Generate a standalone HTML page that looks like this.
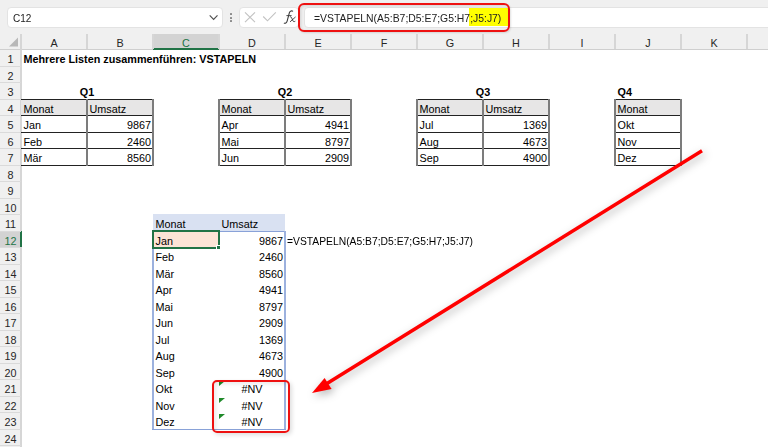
<!DOCTYPE html><html><head><meta charset="utf-8"><style>
*{margin:0;padding:0;box-sizing:border-box}
html,body{width:768px;height:447px;overflow:hidden;background:#fff;font-family:"Liberation Sans",sans-serif;font-size:10.8px;color:#000}
.a{position:absolute}
.t{position:absolute;white-space:nowrap;line-height:12px}
</style></head><body><div class="a" style="left:0;top:0;width:768px;height:50px;background:#f0f0f0"></div>
<div class="a" style="left:7px;top:7px;width:216px;height:21px;background:#fff;border:1px solid #e3e3e3;border-radius:4px"></div>
<div class="t" style="left:12.5px;top:12px;color:#222;transform:scaleX(0.93);transform-origin:0 0">C12</div>
<svg class="a" style="left:208px;top:13px" width="12" height="8" viewBox="0 0 12 8"><path d="M1.7 2.4 L5.6 6.4 L9.5 2.4" fill="none" stroke="#505050" stroke-width="1.15"/></svg>
<div class="a" style="left:230px;top:13px;width:2px;height:2px;background:#8a8a8a;border-radius:0.5px"></div>
<div class="a" style="left:230px;top:16.5px;width:2px;height:2px;background:#8a8a8a;border-radius:0.5px"></div>
<div class="a" style="left:230px;top:20px;width:2px;height:2px;background:#8a8a8a;border-radius:0.5px"></div>
<div class="a" style="left:239px;top:7px;width:60px;height:21px;background:#fff;border:1px solid #e3e3e3;border-radius:4px"></div>
<svg class="a" style="left:244px;top:12px" width="12" height="11" viewBox="0 0 12 11"><path d="M1 0.4 L11 10.2 M11 0.4 L1 10.2" fill="none" stroke="#c2c2c2" stroke-width="1.15"/></svg>
<svg class="a" style="left:262px;top:12px" width="15" height="11" viewBox="0 0 15 11"><path d="M1.2 4.5 L5.5 8.8 L13.8 0.4" fill="none" stroke="#c2c2c2" stroke-width="1.15"/></svg>
<svg class="a" style="left:0;top:0" width="300" height="30" viewBox="0 0 300 30"><path d="M293 11.4 C291.8 10.4 290 10.9 289.4 12.6 L287.2 20.8 C286.6 23 285.2 23.6 283.9 23" fill="none" stroke="#3a3a3a" stroke-width="1.1"/><path d="M286.4 15.6 L291.6 15.6" stroke="#3a3a3a" stroke-width="0.9"/><path d="M289.9 16.8 C291 16.6 291.4 17.2 291.9 18.4 L292.9 20.8 C293.3 21.7 294.3 21.9 295.3 21.2" fill="none" stroke="#3a3a3a" stroke-width="1"/><path d="M295.6 16.9 L290 21.9" stroke="#3a3a3a" stroke-width="0.9"/></svg>
<div class="a" style="left:304px;top:6.5px;width:470px;height:21px;background:#fff;border:1px solid #e3e3e3;border-radius:4px"></div>
<div class="a" style="left:469px;top:8px;width:39px;height:18px;background:#ffff00"></div>
<div class="t" style="left:313.5px;top:11.8px;color:#222;transform:scaleX(0.963);transform-origin:0 0">=VSTAPELN(A5:B7;D5:E7;G5:H7;J5:J7)</div>
<div class="a" style="left:297.5px;top:3px;width:212px;height:29px;border:2px solid #ee1111;border-radius:6px;box-shadow:inset 1px 1px 3px rgba(0,0,0,0.12), 1px 1px 2px rgba(0,0,0,0.12)"></div>
<div class="a" style="left:0;top:49px;width:768px;height:1px;background:#cfcfcf"></div>
<div class="a" style="left:153px;top:34px;width:66px;height:15px;background:#d3d3d3"></div>
<div class="a" style="left:153px;top:48px;width:66px;height:2px;background:#217346"></div>
<div class="a" style="left:86px;top:34px;width:2px;height:15px;background:#d6d6d6"></div>
<div class="t" style="left:21px;top:36.5px;width:66px;text-align:center;color:#262626">A</div>
<div class="a" style="left:152px;top:34px;width:2px;height:15px;background:#d6d6d6"></div>
<div class="t" style="left:87px;top:36.5px;width:66px;text-align:center;color:#262626">B</div>
<div class="a" style="left:218px;top:34px;width:2px;height:15px;background:#d6d6d6"></div>
<div class="t" style="left:153px;top:36.5px;width:66px;text-align:center;color:#217346">C</div>
<div class="a" style="left:284px;top:34px;width:2px;height:15px;background:#d6d6d6"></div>
<div class="t" style="left:219px;top:36.5px;width:66px;text-align:center;color:#262626">D</div>
<div class="a" style="left:350px;top:34px;width:2px;height:15px;background:#d6d6d6"></div>
<div class="t" style="left:285px;top:36.5px;width:66px;text-align:center;color:#262626">E</div>
<div class="a" style="left:416px;top:34px;width:2px;height:15px;background:#d6d6d6"></div>
<div class="t" style="left:351px;top:36.5px;width:66px;text-align:center;color:#262626">F</div>
<div class="a" style="left:482px;top:34px;width:2px;height:15px;background:#d6d6d6"></div>
<div class="t" style="left:417px;top:36.5px;width:66px;text-align:center;color:#262626">G</div>
<div class="a" style="left:548px;top:34px;width:2px;height:15px;background:#d6d6d6"></div>
<div class="t" style="left:483px;top:36.5px;width:66px;text-align:center;color:#262626">H</div>
<div class="a" style="left:614px;top:34px;width:2px;height:15px;background:#d6d6d6"></div>
<div class="t" style="left:549px;top:36.5px;width:66px;text-align:center;color:#262626">I</div>
<div class="a" style="left:680px;top:34px;width:2px;height:15px;background:#d6d6d6"></div>
<div class="t" style="left:615px;top:36.5px;width:66px;text-align:center;color:#262626">J</div>
<div class="a" style="left:746px;top:34px;width:2px;height:15px;background:#d6d6d6"></div>
<div class="t" style="left:681px;top:36.5px;width:66px;text-align:center;color:#262626">K</div>
<svg class="a" style="left:8px;top:37px" width="11" height="10" viewBox="0 0 11 10"><path d="M10 0.5 L10 9.5 L1 9.5 Z" fill="#b8b8b8"/></svg>
<div class="a" style="left:0;top:50px;width:21px;height:397px;background:#f0f0f0"></div>
<div class="a" style="left:20px;top:34px;width:2px;height:413px;background:#d6d6d6"></div>
<div class="a" style="left:0;top:231px;width:21px;height:16px;background:#d3d3d3"></div>
<div class="a" style="left:20px;top:231px;width:2px;height:16px;background:#217346"></div>
<div class="a" style="left:0;top:66px;width:21px;height:1px;background:#dadada"></div>
<div class="t" style="left:0;top:53.20px;width:21px;text-align:center;color:#262626">1</div>
<div class="a" style="left:0;top:82px;width:21px;height:1px;background:#dadada"></div>
<div class="t" style="left:0;top:69.70px;width:21px;text-align:center;color:#262626">2</div>
<div class="a" style="left:0;top:99px;width:21px;height:1px;background:#dadada"></div>
<div class="t" style="left:0;top:86.20px;width:21px;text-align:center;color:#262626">3</div>
<div class="a" style="left:0;top:115px;width:21px;height:1px;background:#dadada"></div>
<div class="t" style="left:0;top:102.70px;width:21px;text-align:center;color:#262626">4</div>
<div class="a" style="left:0;top:132px;width:21px;height:1px;background:#dadada"></div>
<div class="t" style="left:0;top:119.20px;width:21px;text-align:center;color:#262626">5</div>
<div class="a" style="left:0;top:148px;width:21px;height:1px;background:#dadada"></div>
<div class="t" style="left:0;top:135.70px;width:21px;text-align:center;color:#262626">6</div>
<div class="a" style="left:0;top:165px;width:21px;height:1px;background:#dadada"></div>
<div class="t" style="left:0;top:152.20px;width:21px;text-align:center;color:#262626">7</div>
<div class="a" style="left:0;top:181px;width:21px;height:1px;background:#dadada"></div>
<div class="t" style="left:0;top:168.70px;width:21px;text-align:center;color:#262626">8</div>
<div class="a" style="left:0;top:198px;width:21px;height:1px;background:#dadada"></div>
<div class="t" style="left:0;top:185.20px;width:21px;text-align:center;color:#262626">9</div>
<div class="a" style="left:0;top:214px;width:21px;height:1px;background:#dadada"></div>
<div class="t" style="left:0;top:201.70px;width:21px;text-align:center;color:#262626">10</div>
<div class="a" style="left:0;top:231px;width:21px;height:1px;background:#dadada"></div>
<div class="t" style="left:0;top:218.20px;width:21px;text-align:center;color:#262626">11</div>
<div class="a" style="left:0;top:247px;width:21px;height:1px;background:#dadada"></div>
<div class="t" style="left:0;top:234.70px;width:21px;text-align:center;color:#217346">12</div>
<div class="a" style="left:0;top:264px;width:21px;height:1px;background:#dadada"></div>
<div class="t" style="left:0;top:251.20px;width:21px;text-align:center;color:#262626">13</div>
<div class="a" style="left:0;top:280px;width:21px;height:1px;background:#dadada"></div>
<div class="t" style="left:0;top:267.70px;width:21px;text-align:center;color:#262626">14</div>
<div class="a" style="left:0;top:297px;width:21px;height:1px;background:#dadada"></div>
<div class="t" style="left:0;top:284.20px;width:21px;text-align:center;color:#262626">15</div>
<div class="a" style="left:0;top:313px;width:21px;height:1px;background:#dadada"></div>
<div class="t" style="left:0;top:300.70px;width:21px;text-align:center;color:#262626">16</div>
<div class="a" style="left:0;top:330px;width:21px;height:1px;background:#dadada"></div>
<div class="t" style="left:0;top:317.20px;width:21px;text-align:center;color:#262626">17</div>
<div class="a" style="left:0;top:346px;width:21px;height:1px;background:#dadada"></div>
<div class="t" style="left:0;top:333.70px;width:21px;text-align:center;color:#262626">18</div>
<div class="a" style="left:0;top:363px;width:21px;height:1px;background:#dadada"></div>
<div class="t" style="left:0;top:350.20px;width:21px;text-align:center;color:#262626">19</div>
<div class="a" style="left:0;top:379px;width:21px;height:1px;background:#dadada"></div>
<div class="t" style="left:0;top:366.70px;width:21px;text-align:center;color:#262626">20</div>
<div class="a" style="left:0;top:396px;width:21px;height:1px;background:#dadada"></div>
<div class="t" style="left:0;top:383.20px;width:21px;text-align:center;color:#262626">21</div>
<div class="a" style="left:0;top:412px;width:21px;height:1px;background:#dadada"></div>
<div class="t" style="left:0;top:399.70px;width:21px;text-align:center;color:#262626">22</div>
<div class="a" style="left:0;top:429px;width:21px;height:1px;background:#dadada"></div>
<div class="t" style="left:0;top:416.20px;width:21px;text-align:center;color:#262626">23</div>
<div class="a" style="left:0;top:445px;width:21px;height:1px;background:#dadada"></div>
<div class="t" style="left:0;top:432.70px;width:21px;text-align:center;color:#262626">24</div>
<div class="a" style="left:0;top:462px;width:21px;height:1px;background:#dadada"></div>
<div class="t" style="left:0;top:449.20px;width:21px;text-align:center;color:#262626">25</div>
<div class="t" style="left:23.5px;top:53.20px;font-weight:bold;color:#000">Mehrere Listen zusammenführen: VSTAPELN</div>
<div class="a" style="left:21px;top:99px;width:132px;height:16px;background:#e7e6e6"></div>
<div class="a" style="left:21px;top:99px;width:133px;height:1px;background:#222"></div>
<div class="a" style="left:21px;top:115px;width:133px;height:1px;background:#222"></div>
<div class="a" style="left:21px;top:132px;width:133px;height:1px;background:#222"></div>
<div class="a" style="left:21px;top:148px;width:133px;height:1px;background:#222"></div>
<div class="a" style="left:21px;top:165px;width:133px;height:1px;background:#222"></div>
<div class="a" style="left:86px;top:99px;width:2px;height:67px;background:#7c7c7c"></div>
<div class="a" style="left:152px;top:99px;width:2px;height:67px;background:#7c7c7c"></div>
<div class="t" style="left:21px;top:86.20px;width:132px;text-align:center;font-weight:bold;color:#000">Q1</div>
<div class="t" style="left:23.5px;top:102.70px;color:#000">Monat</div>
<div class="t" style="left:89.5px;top:102.70px;color:#000">Umsatz</div>
<div class="t" style="left:23.5px;top:119.20px;color:#000">Jan</div>
<div class="t" style="left:87px;top:119.20px;width:64px;text-align:right;color:#000">9867</div>
<div class="t" style="left:23.5px;top:135.70px;color:#000">Feb</div>
<div class="t" style="left:87px;top:135.70px;width:64px;text-align:right;color:#000">2460</div>
<div class="t" style="left:23.5px;top:152.20px;color:#000">Mär</div>
<div class="t" style="left:87px;top:152.20px;width:64px;text-align:right;color:#000">8560</div>
<div class="a" style="left:219px;top:99px;width:132px;height:16px;background:#e7e6e6"></div>
<div class="a" style="left:219px;top:99px;width:133px;height:1px;background:#222"></div>
<div class="a" style="left:219px;top:115px;width:133px;height:1px;background:#222"></div>
<div class="a" style="left:219px;top:132px;width:133px;height:1px;background:#222"></div>
<div class="a" style="left:219px;top:148px;width:133px;height:1px;background:#222"></div>
<div class="a" style="left:219px;top:165px;width:133px;height:1px;background:#222"></div>
<div class="a" style="left:218px;top:99px;width:2px;height:67px;background:#7c7c7c"></div>
<div class="a" style="left:284px;top:99px;width:2px;height:67px;background:#7c7c7c"></div>
<div class="a" style="left:350px;top:99px;width:2px;height:67px;background:#7c7c7c"></div>
<div class="t" style="left:219px;top:86.20px;width:132px;text-align:center;font-weight:bold;color:#000">Q2</div>
<div class="t" style="left:221.5px;top:102.70px;color:#000">Monat</div>
<div class="t" style="left:287.5px;top:102.70px;color:#000">Umsatz</div>
<div class="t" style="left:221.5px;top:119.20px;color:#000">Apr</div>
<div class="t" style="left:285px;top:119.20px;width:64px;text-align:right;color:#000">4941</div>
<div class="t" style="left:221.5px;top:135.70px;color:#000">Mai</div>
<div class="t" style="left:285px;top:135.70px;width:64px;text-align:right;color:#000">8797</div>
<div class="t" style="left:221.5px;top:152.20px;color:#000">Jun</div>
<div class="t" style="left:285px;top:152.20px;width:64px;text-align:right;color:#000">2909</div>
<div class="a" style="left:417px;top:99px;width:132px;height:16px;background:#e7e6e6"></div>
<div class="a" style="left:417px;top:99px;width:133px;height:1px;background:#222"></div>
<div class="a" style="left:417px;top:115px;width:133px;height:1px;background:#222"></div>
<div class="a" style="left:417px;top:132px;width:133px;height:1px;background:#222"></div>
<div class="a" style="left:417px;top:148px;width:133px;height:1px;background:#222"></div>
<div class="a" style="left:417px;top:165px;width:133px;height:1px;background:#222"></div>
<div class="a" style="left:416px;top:99px;width:2px;height:67px;background:#7c7c7c"></div>
<div class="a" style="left:482px;top:99px;width:2px;height:67px;background:#7c7c7c"></div>
<div class="a" style="left:548px;top:99px;width:2px;height:67px;background:#7c7c7c"></div>
<div class="t" style="left:417px;top:86.20px;width:132px;text-align:center;font-weight:bold;color:#000">Q3</div>
<div class="t" style="left:419.5px;top:102.70px;color:#000">Monat</div>
<div class="t" style="left:485.5px;top:102.70px;color:#000">Umsatz</div>
<div class="t" style="left:419.5px;top:119.20px;color:#000">Jul</div>
<div class="t" style="left:483px;top:119.20px;width:64px;text-align:right;color:#000">1369</div>
<div class="t" style="left:419.5px;top:135.70px;color:#000">Aug</div>
<div class="t" style="left:483px;top:135.70px;width:64px;text-align:right;color:#000">4673</div>
<div class="t" style="left:419.5px;top:152.20px;color:#000">Sep</div>
<div class="t" style="left:483px;top:152.20px;width:64px;text-align:right;color:#000">4900</div>
<div class="a" style="left:615px;top:99px;width:66px;height:16px;background:#e7e6e6"></div>
<div class="a" style="left:615px;top:99px;width:67px;height:1px;background:#222"></div>
<div class="a" style="left:615px;top:115px;width:67px;height:1px;background:#222"></div>
<div class="a" style="left:615px;top:132px;width:67px;height:1px;background:#222"></div>
<div class="a" style="left:615px;top:148px;width:67px;height:1px;background:#222"></div>
<div class="a" style="left:615px;top:165px;width:67px;height:1px;background:#222"></div>
<div class="a" style="left:614px;top:99px;width:2px;height:67px;background:#7c7c7c"></div>
<div class="a" style="left:680px;top:99px;width:2px;height:67px;background:#7c7c7c"></div>
<div class="t" style="left:617.5px;top:86.20px;font-weight:bold;color:#000">Q4</div>
<div class="t" style="left:617.5px;top:102.70px;color:#000">Monat</div>
<div class="t" style="left:617.5px;top:119.20px;color:#000">Okt</div>
<div class="t" style="left:617.5px;top:135.70px;color:#000">Nov</div>
<div class="t" style="left:617.5px;top:152.20px;color:#000">Dez</div>
<div class="a" style="left:153px;top:214px;width:132px;height:17px;background:#d9e1f2"></div>
<div class="a" style="left:152px;top:231px;width:134px;height:1px;background:#89a2d8"></div>
<div class="a" style="left:152px;top:231px;width:2px;height:199px;background:#9cb1de"></div>
<div class="a" style="left:284px;top:231px;width:2px;height:199px;background:#9cb1de"></div>
<div class="a" style="left:152px;top:429px;width:134px;height:1px;background:#89a2d8"></div>
<div class="a" style="left:153px;top:231px;width:66px;height:16px;background:#fce4d6"></div>
<div class="a" style="left:152px;top:230px;width:68px;height:19px;border:2px solid #217346"></div>
<div class="a" style="left:216px;top:245px;width:5px;height:5px;background:#217346;border:1px solid #fff"></div>
<div class="t" style="left:155.5px;top:218.20px;color:#000">Monat</div>
<div class="t" style="left:221.5px;top:218.20px;color:#000">Umsatz</div>
<div class="t" style="left:155.5px;top:234.70px;color:#000">Jan</div>
<div class="t" style="left:219px;top:234.70px;width:64px;text-align:right;color:#000">9867</div>
<div class="t" style="left:155.5px;top:251.20px;color:#000">Feb</div>
<div class="t" style="left:219px;top:251.20px;width:64px;text-align:right;color:#000">2460</div>
<div class="t" style="left:155.5px;top:267.70px;color:#000">Mär</div>
<div class="t" style="left:219px;top:267.70px;width:64px;text-align:right;color:#000">8560</div>
<div class="t" style="left:155.5px;top:284.20px;color:#000">Apr</div>
<div class="t" style="left:219px;top:284.20px;width:64px;text-align:right;color:#000">4941</div>
<div class="t" style="left:155.5px;top:300.70px;color:#000">Mai</div>
<div class="t" style="left:219px;top:300.70px;width:64px;text-align:right;color:#000">8797</div>
<div class="t" style="left:155.5px;top:317.20px;color:#000">Jun</div>
<div class="t" style="left:219px;top:317.20px;width:64px;text-align:right;color:#000">2909</div>
<div class="t" style="left:155.5px;top:333.70px;color:#000">Jul</div>
<div class="t" style="left:219px;top:333.70px;width:64px;text-align:right;color:#000">1369</div>
<div class="t" style="left:155.5px;top:350.20px;color:#000">Aug</div>
<div class="t" style="left:219px;top:350.20px;width:64px;text-align:right;color:#000">4673</div>
<div class="t" style="left:155.5px;top:366.70px;color:#000">Sep</div>
<div class="t" style="left:219px;top:366.70px;width:64px;text-align:right;color:#000">4900</div>
<div class="t" style="left:155.5px;top:383.20px;color:#000">Okt</div>
<div class="t" style="left:219px;top:383.20px;width:66px;text-align:center;color:#000">#NV</div>
<svg class="a" style="left:219px;top:380.5px" width="6" height="6" viewBox="0 0 6 6"><path d="M0 0 L6 0 L0 5 Z" fill="#1f8a2a"/></svg>
<div class="t" style="left:155.5px;top:399.70px;color:#000">Nov</div>
<div class="t" style="left:219px;top:399.70px;width:66px;text-align:center;color:#000">#NV</div>
<svg class="a" style="left:219px;top:397.5px" width="6" height="6" viewBox="0 0 6 6"><path d="M0 0 L6 0 L0 5 Z" fill="#1f8a2a"/></svg>
<div class="t" style="left:155.5px;top:416.20px;color:#000">Dez</div>
<div class="t" style="left:219px;top:416.20px;width:66px;text-align:center;color:#000">#NV</div>
<svg class="a" style="left:219px;top:413.5px" width="6" height="6" viewBox="0 0 6 6"><path d="M0 0 L6 0 L0 5 Z" fill="#1f8a2a"/></svg>
<div class="t" style="left:287px;top:234.70px;transform:scaleX(0.956);transform-origin:0 0">=VSTAPELN(A5:B7;D5:E7;G5:H7;J5:J7)</div>
<div class="a" style="left:212px;top:380px;width:78px;height:53px;border:2px solid #ee1111;border-radius:5px;box-shadow:2px 2px 4px rgba(0,0,0,0.13), inset 2px 2px 4px rgba(0,0,0,0.09)"></div>
<svg class="a" style="left:0;top:0;filter:drop-shadow(2px 3px 4px rgba(0,0,0,0.30))" width="768" height="447" viewBox="0 0 768 447"><path d="M702 150.8 L327 383.5" stroke="#ff0000" stroke-width="3.5" stroke-linecap="butt" fill="none"/><path d="M312 393 L324.6 378 L331.6 389 Z" fill="#ff0000"/></svg></body></html>
